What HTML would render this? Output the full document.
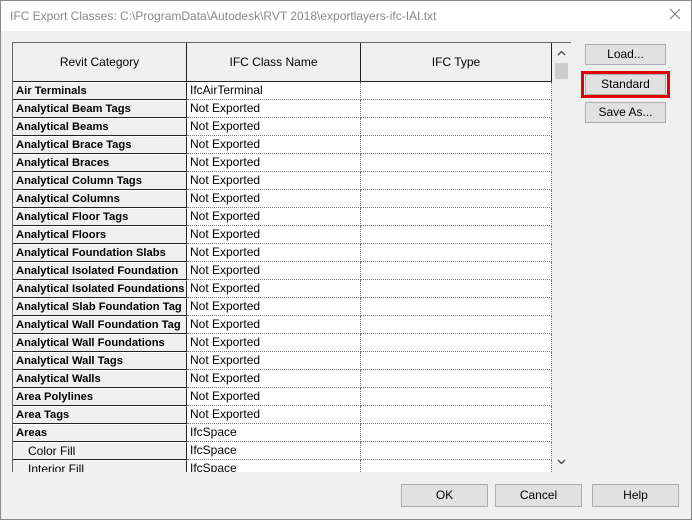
<!DOCTYPE html>
<html><head><style>
*{box-sizing:border-box;margin:0;padding:0}
body{width:692px;height:520px;background:#f0f0f0;font-family:"Liberation Sans",sans-serif;font-size:12px;color:#000;position:relative;overflow:hidden}
.win{position:absolute;left:0;top:0;width:692px;height:520px;border:1px solid #888}
.title{position:absolute;left:0;top:0;width:690px;height:30px;background:#fff;color:#888;font-size:12px;line-height:30px;padding-left:9px}
.x{position:absolute;right:10px;top:7px}
.grid{position:absolute;left:12px;top:42px;width:559px;height:430px;border-left:1px solid #666;border-top:1px solid #666;background:#fff;overflow:hidden}
.hd{position:absolute;top:0;height:39px;background:#f0f0f0;border-right:1px solid #222;border-bottom:1px solid #222;text-align:center;line-height:38px}
.r{position:absolute;left:0;height:18px;width:539px}
.c1{position:absolute;left:0;width:174px;height:18px;background:#f0f0f0;border-right:1px solid #222;border-bottom:1px solid #222;border-top:1px solid #fff;font-weight:bold;font-size:11.2px;line-height:17px;padding-left:3px;white-space:nowrap;overflow:hidden}
.c1.s{font-weight:normal;font-size:12px;line-height:16px;padding-left:15px}
.c2{position:absolute;left:174px;width:174px;height:18px;border-right:1px dotted #777;border-bottom:1px dotted #777;line-height:17px;padding-left:3px;white-space:nowrap}
.c3{position:absolute;left:348px;width:191px;height:18px;border-right:1px dotted #777;border-bottom:1px dotted #777}
.sb{position:absolute;left:539px;top:0;width:19px;height:430px;background:#f0f0f0}
.btn{position:absolute;background:#e1e1e1;border:1px solid #adadad;text-align:center;font-size:12px}
</style></head><body>
<div class="win">
<div class="title">IFC Export Classes: C:\ProgramData\Autodesk\RVT 2018\exportlayers-ifc-IAI.txt<svg class="x" width="12" height="12"><path d="M1 1L11 11M11 1L1 11" stroke="#777" stroke-width="1"/></svg></div>
</div>
<div class="grid">
<div class="hd" style="left:0;width:174px">Revit Category</div>
<div class="hd" style="left:174px;width:174px">IFC Class Name</div>
<div class="hd" style="left:348px;width:191px">IFC Type</div>
<div id="rows"></div>
<div class="sb">
<svg width="19" height="430" style="position:absolute;left:0;top:0"><path d="M6 12 L9.5 8.5 L13 12" fill="none" stroke="#444" stroke-width="1.3"/><rect x="3" y="20" width="13" height="16" fill="#cdcdcd"/><path d="M6 417 L9.5 420.5 L13 417" fill="none" stroke="#444" stroke-width="1.3"/></svg>
</div>
</div>
<div class="btn" style="left:585px;top:44px;width:81px;height:21px;line-height:19px">Load...</div>
<div style="position:absolute;left:581px;top:71px;width:89px;height:27px;border:3px solid #e00000"></div>
<div class="btn" style="left:585px;top:74px;width:81px;height:21px;line-height:19px">Standard</div>
<div class="btn" style="left:585px;top:102px;width:81px;height:21px;line-height:19px">Save As...</div>
<div class="btn" style="left:401px;top:484px;width:87px;height:23px;line-height:21px">OK</div>
<div class="btn" style="left:495px;top:484px;width:87px;height:23px;line-height:21px">Cancel</div>
<div class="btn" style="left:592px;top:484px;width:87px;height:23px;line-height:21px">Help</div>
<script>
var d=[["Air Terminals","IfcAirTerminal"],["Analytical Beam Tags"],["Analytical Beams"],["Analytical Brace Tags"],["Analytical Braces"],["Analytical Column Tags"],["Analytical Columns"],["Analytical Floor Tags"],["Analytical Floors"],["Analytical Foundation Slabs"],["Analytical Isolated Foundation"],["Analytical Isolated Foundations"],["Analytical Slab Foundation Tag"],["Analytical Wall Foundation Tag"],["Analytical Wall Foundations"],["Analytical Wall Tags"],["Analytical Walls"],["Area Polylines"],["Area Tags"],["Areas","IfcSpace"],["Color Fill","IfcSpace",1],["Interior Fill","IfcSpace",1]];
var h="";d.forEach(function(r,i){var t=39+18*i;h+='<div class="r" style="top:'+t+'px"><div class="c1'+(r[2]?' s':'')+'">'+r[0]+'</div><div class="c2">'+(r[1]||"Not Exported")+'</div><div class="c3"></div></div>';});
document.getElementById("rows").innerHTML=h;
</script>
</body></html>
